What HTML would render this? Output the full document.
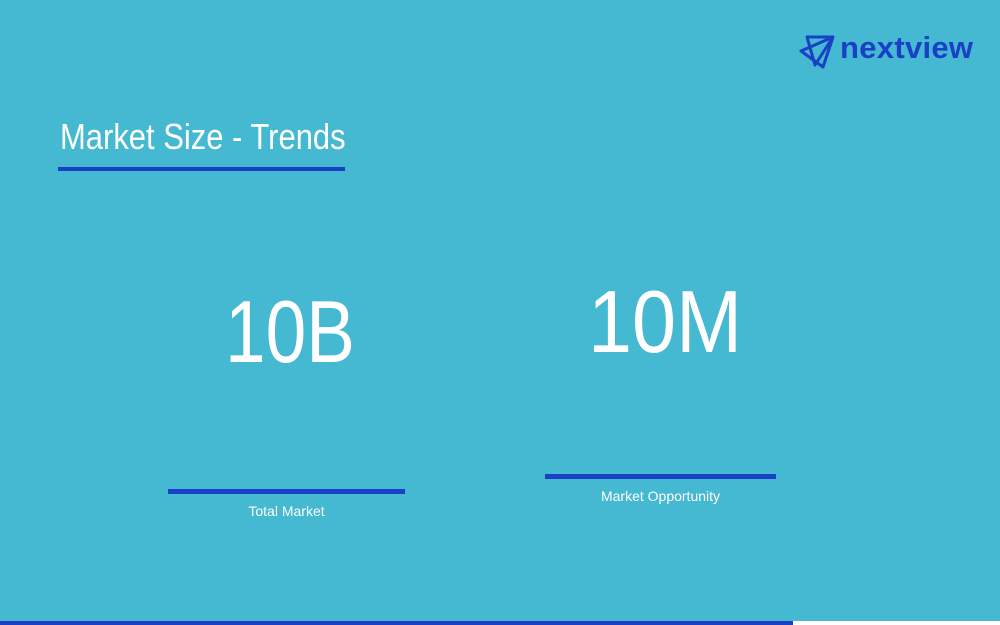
<!DOCTYPE html>
<html><head><meta charset="utf-8"><style>
*{margin:0;padding:0}
body{width:1000px;height:625px;background:#45b8d2;position:relative;overflow:hidden;font-family:"Liberation Sans",sans-serif;color:#fff}
.a{position:absolute;white-space:nowrap}
.bar{position:absolute;background:#1a40c6}
</style></head><body>
<div class="a" style="left:60px;top:117px;font-size:36px;line-height:40px;transform:scaleX(0.86);transform-origin:left">Market Size - Trends</div>
<div class="bar" style="left:58px;top:167px;width:287px;height:4px"></div>
<div class="a" style="left:225px;top:284px;font-size:88px;line-height:96px;transform:scaleX(0.83);transform-origin:left">10B</div>
<div class="a" style="left:588px;top:274px;font-size:88px;line-height:96px;transform:scaleX(0.9);transform-origin:left">10M</div>
<div class="bar" style="left:168px;top:489px;width:237px;height:5px"></div>
<div class="bar" style="left:545px;top:474px;width:231px;height:5px"></div>
<div class="a" style="left:168px;width:237px;text-align:center;top:503px;font-size:14px">Total Market</div>
<div class="a" style="left:545px;width:231px;text-align:center;top:488px;font-size:14px">Market Opportunity</div>
<svg class="a" style="left:799px;top:35px" width="36" height="34" viewBox="0 0 36 34" fill="none" stroke="#1a40c6" stroke-width="3" stroke-linejoin="round">
<path d="M8 2 L34 2 L16 30 Z"/><path d="M2 16 L34 2 L24 32 Z"/>
</svg>
<div class="a" style="left:840px;top:30px;font-size:31px;font-weight:bold;color:#1a40c6;letter-spacing:0.3px">nextview</div>
<div class="bar" style="left:0;top:621px;width:793px;height:4px"></div>
<div class="a" style="left:793px;top:621px;width:207px;height:4px;background:#fff"></div>
</body></html>
